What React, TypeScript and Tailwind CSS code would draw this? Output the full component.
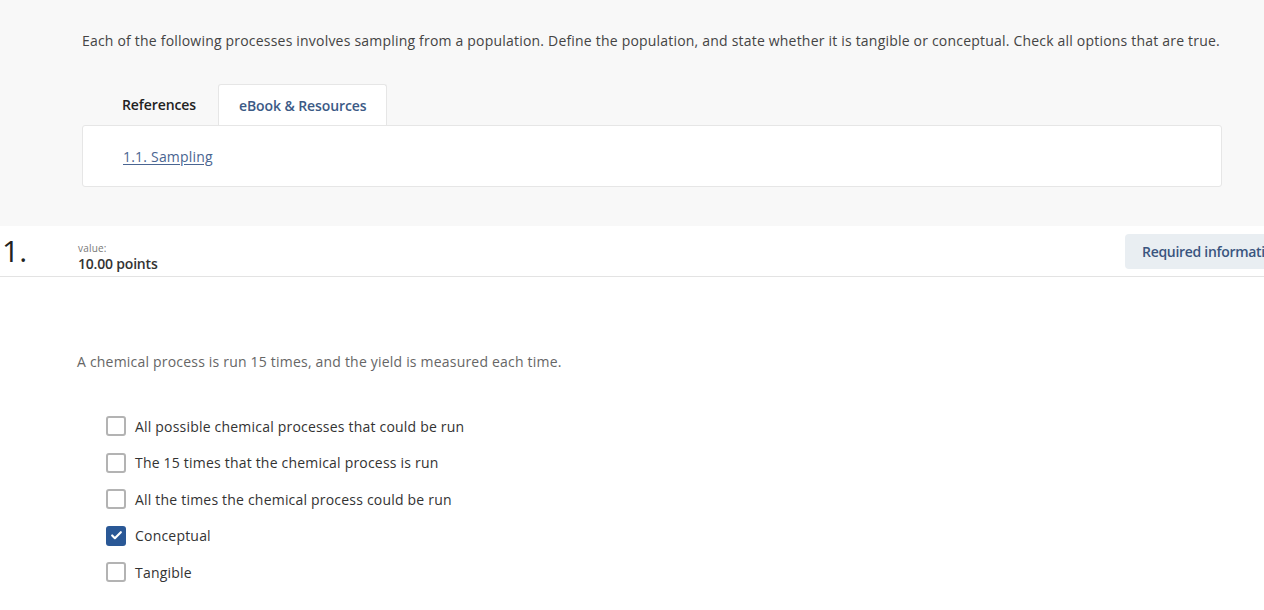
import { Check } from 'lucide-react'

const options = [
  { label: 'All possible chemical processes that could be run', checked: false },
  { label: 'The 15 times that the chemical process is run', checked: false },
  { label: 'All the times the chemical process could be run', checked: false },
  { label: 'Conceptual', checked: true },
  { label: 'Tangible', checked: false },
]

function Checkbox({ checked }: { checked: boolean }) {
  return checked ? (
    <span className="flex h-5 w-5 items-center justify-center rounded-[3px] bg-[#2a5896]">
      <Check className="h-[13px] w-[13px] text-white" strokeWidth={4} />
    </span>
  ) : (
    <span className="h-5 w-5 rounded-[3px] border-2 border-[#b3b3b3] bg-white" />
  )
}

export default function App() {
  return (
    <div
      className="min-h-[610px] w-[1264px] overflow-hidden bg-white text-[14px] tracking-[0.2px] text-[#333]"
      style={{ fontFamily: '"Open Sans", "Liberation Sans", sans-serif' }}
    >
      {/* prompt + references */}
      <section className="bg-[#f8f8f8] pl-[82px] pr-[42px] pt-[31px] pb-[39px]">
        <p className="whitespace-nowrap leading-5 text-[#444]">
          Each of the following processes involves sampling from a population. Define the population, and state whether it is tangible or conceptual. Check all options that are true.
        </p>

        <div className="mt-[33px] flex pl-5">
          <div className="flex h-[41px] items-center pl-5 pr-[22px] font-semibold tracking-[-0.1px] text-[#222]">References</div>
          <div className="relative z-10 -mb-px flex h-[41px] items-center rounded-t-[3px] border border-b-0 border-[#e6e6e6] bg-white px-5 font-semibold tracking-[-0.1px] text-[#3c5a86]">
            eBook &amp; Resources
          </div>
        </div>
        <div className="flex h-[62px] items-center rounded-[3px] border border-[#e6e6e6] bg-white pl-10">
          <a href="#" className="text-[#4a6591] underline underline-offset-2">
            1.1. Sampling
          </a>
        </div>
      </section>

      {/* question header */}
      <header className="flex h-[51px] items-center border-b border-[#e3e3e3]">
        <div className="w-[78px] shrink-0 pl-[2px] text-[30px] leading-none text-[#222]">1.</div>
        <div className="flex flex-col pt-[13px]">
          <span className="text-[10px] leading-3 text-[#777]">value:</span>
          <span className="text-[14px] leading-5 font-semibold tracking-[-0.2px] text-[#333]">10.00 points</span>
        </div>
        <div className="ml-auto -mr-[31px] mt-2 flex h-[35px] w-[170px] shrink-0 items-center self-start whitespace-nowrap rounded-l-[4px] bg-[#e9eef2] pl-[17px] font-semibold tracking-[-0.3px] text-[#3a557f]">
          Required information
        </div>
      </header>

      {/* question body */}
      <main className="px-[77px] pt-[75px]">
        <p className="leading-5 text-[#666]">A chemical process is run 15 times, and the yield is measured each time.</p>
        <ul className="mt-[44px] flex flex-col gap-[16.5px] pl-[29px]">
          {options.map((o) => (
            <li key={o.label} className="flex h-5 items-center gap-[9px]">
              <Checkbox checked={o.checked} />
              <span className="text-[#333]">{o.label}</span>
            </li>
          ))}
        </ul>
      </main>
    </div>
  )
}
